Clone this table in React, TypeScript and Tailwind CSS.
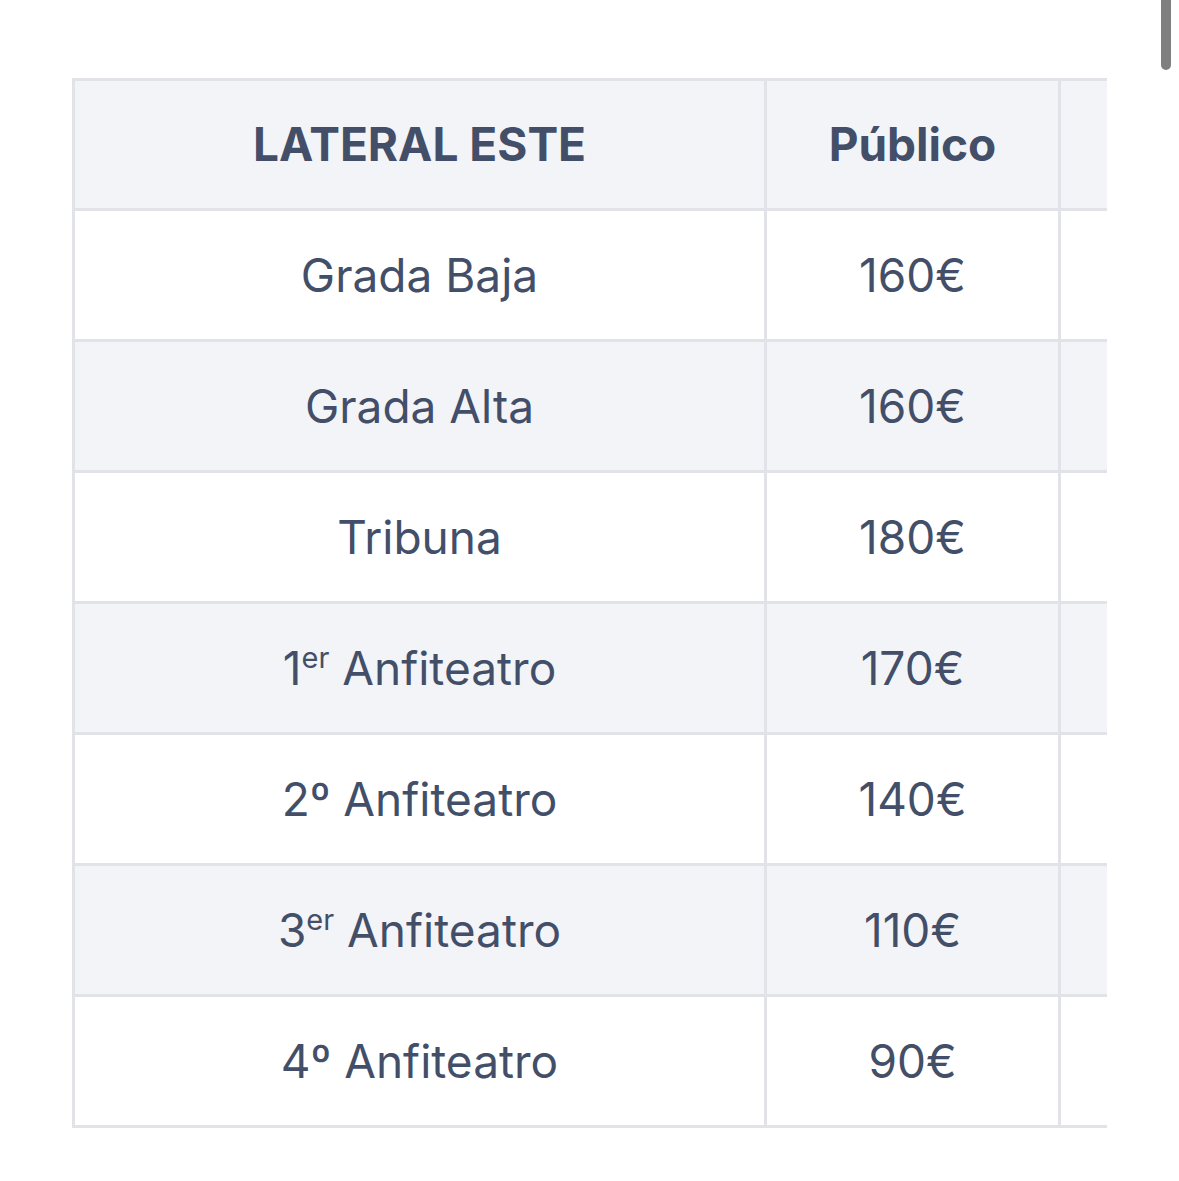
const rows: { label: React.ReactNode; price: string }[] = [
  { label: "Grada Baja", price: "160€" },
  { label: "Grada Alta", price: "160€" },
  { label: "Tribuna", price: "180€" },
  {
    label: (
      <>
        1<sup className="text-[29px] relative -top-[17px]">er</sup> Anfiteatro
      </>
    ),
    price: "170€",
  },
  { label: "2º Anfiteatro", price: "140€" },
  {
    label: (
      <>
        3<sup className="text-[29px] relative -top-[17px]">er</sup> Anfiteatro
      </>
    ),
    price: "110€",
  },
  { label: "4º Anfiteatro", price: "90€" },
];

const cell =
  "flex items-center justify-center border-r-[3px] border-b-[3px] border-[#e1e3e8]";

export default function App() {
  return (
    <div className="relative w-[1179px] h-[1181px] bg-white font-['Inter',sans-serif] text-[#434f69]">
      <div className="absolute right-[8px] top-0 w-[10px] h-[70px] rounded-b-full bg-[#7f7f7f]" />
      <div className="pt-[78px] pl-[72px]">
        <div className="w-[1035px] overflow-hidden">
          <div className="w-[1300px] border-l-[3px] border-t-[3px] border-[#e1e3e8]">
            <div className="flex bg-[#f3f4f7] h-[130px]">
              <div className={`${cell} w-[692px] text-[46px] font-bold`}>
                LATERAL ESTE
              </div>
              <div className={`${cell} w-[294px] text-[46px] font-bold`}>
                Público
              </div>
              <div className={`${cell} w-[300px]`} />
            </div>
            {rows.map((r, i) => (
              <div
                key={i}
                className={`flex h-[131px] ${i % 2 === 1 ? "bg-[#f3f4f7]" : "bg-white"}`}
              >
                <div className={`${cell} w-[692px] text-[46px]`}>
                  <span>{r.label}</span>
                </div>
                <div className={`${cell} w-[294px] text-[46px]`}>{r.price}</div>
                <div className={`${cell} w-[300px]`} />
              </div>
            ))}
          </div>
        </div>
      </div>
    </div>
  );
}
